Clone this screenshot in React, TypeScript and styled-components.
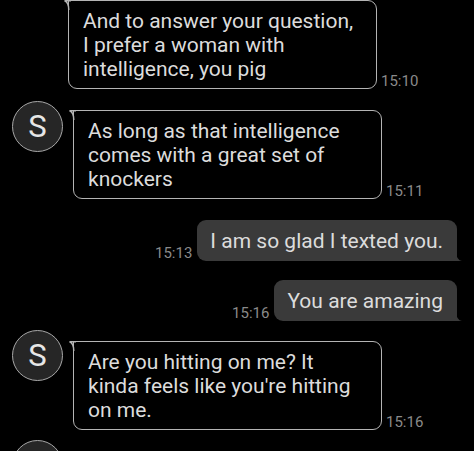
import styled, { createGlobalStyle } from 'styled-components';

const GlobalStyle = createGlobalStyle`
  html, body {
    margin: 0;
    padding: 0;
    background: #000;
  }
  #root {
    height: 451px;
    overflow: hidden;
  }
`;

const Thread = styled.div`
  display: flex;
  flex-direction: column;
  width: 474px;
  height: 451px;
  overflow: hidden;
  background: #000;
  font-family: Roboto, "Noto Sans", sans-serif;
  color: #dcdcdc;
`;

const ReceivedRow = styled.div<{ $mt: number; $indent: number }>`
  display: flex;
  align-items: flex-start;
  gap: 10px;
  margin-top: ${p => p.$mt}px;
  padding-left: ${p => p.$indent}px;
`;

const SentRow = styled.div<{ $mt: number }>`
  display: flex;
  justify-content: flex-end;
  align-items: flex-end;
  gap: 5px;
  margin-top: ${p => p.$mt}px;
  padding-right: 17px;
`;

const Avatar = styled.div`
  flex: none;
  width: 51px;
  height: 51px;
  box-sizing: border-box;
  border-radius: 50%;
  border: 1.5px solid #a8a8a8;
  background: #262626;
  display: flex;
  align-items: center;
  justify-content: center;
  font-size: 31px;
  line-height: 1;
  color: #e6e6e6;
  padding-bottom: 1px;
`;

const Group = styled.div<{ $offset: number }>`
  display: flex;
  align-items: flex-end;
  gap: 4px;
  margin-top: ${p => p.$offset}px;
`;

const InBubble = styled.div`
  position: relative;
  box-sizing: border-box;
  width: 309px;
  padding: 8px 12px 7px 14px;
  border: 1.5px solid #b4b4b4;
  border-radius: 1px 9px 9px 9px;
  font-size: 21px;
  line-height: 24px;
  white-space: nowrap;
`;

const OutBubble = styled.div`
  position: relative;
  padding: 9px 14px 8px 13px;
  background: #3a3a3a;
  border-radius: 9px 9px 1px 9px;
  font-size: 21px;
  line-height: 24px;
  white-space: nowrap;
`;

const Time = styled.span`
  font-size: 15px;
  line-height: 15px;
  color: #8a8a8a;
`;

const InTail = styled.svg`
  position: absolute;
  left: -6.5px;
  top: -1.5px;
  width: 6.5px;
  height: 10px;
  overflow: visible;
`;

const OutTail = styled.svg`
  position: absolute;
  right: -5px;
  bottom: 0;
  width: 6px;
  height: 9px;
`;

const Received = ({ children }: { children: React.ReactNode }) => (
  <InBubble>
    <InTail viewBox="0 0 6.5 10">
      <path d="M5.75 10 Q5.75 2 1.5 0.75 L8 0.75" stroke="#b4b4b4" strokeWidth="1.5" fill="none" />
    </InTail>
    {children}
  </InBubble>
);

const Sent = ({ children }: { children: React.ReactNode }) => (
  <OutBubble>
    <OutTail viewBox="0 0 6 9">
      <path d="M0 0 Q0.5 8.2 6 9 L0 9 Z" fill="#3a3a3a" />
    </OutTail>
    {children}
  </OutBubble>
);

export default function App() {
  return (
    <>
      <GlobalStyle />
      <Thread>
        <ReceivedRow $mt={0} $indent={68}>
          <Group $offset={0}>
            <Received>
              And to answer your question,<br />
              I prefer a woman with<br />
              intelligence, you pig
            </Received>
            <Time>15:10</Time>
          </Group>
        </ReceivedRow>

        <ReceivedRow $mt={12} $indent={12}>
          <Avatar>S</Avatar>
          <Group $offset={9}>
            <Received>
              As long as that intelligence<br />
              comes with a great set of<br />
              knockers
            </Received>
            <Time>15:11</Time>
          </Group>
        </ReceivedRow>

        <SentRow $mt={21}>
          <Time>15:13</Time>
          <Sent>I am so glad I texted you.</Sent>
        </SentRow>

        <SentRow $mt={19}>
          <Time>15:16</Time>
          <Sent>You are amazing</Sent>
        </SentRow>

        <ReceivedRow $mt={9} $indent={12}>
          <Avatar>S</Avatar>
          <Group $offset={11}>
            <Received>
              Are you hitting on me? It<br />
              kinda feels like you're hitting<br />
              on me.
            </Received>
            <Time>15:16</Time>
          </Group>
        </ReceivedRow>

        <ReceivedRow $mt={10} $indent={12}>
          <Avatar aria-hidden="true" />
        </ReceivedRow>
      </Thread>
    </>
  );
}
